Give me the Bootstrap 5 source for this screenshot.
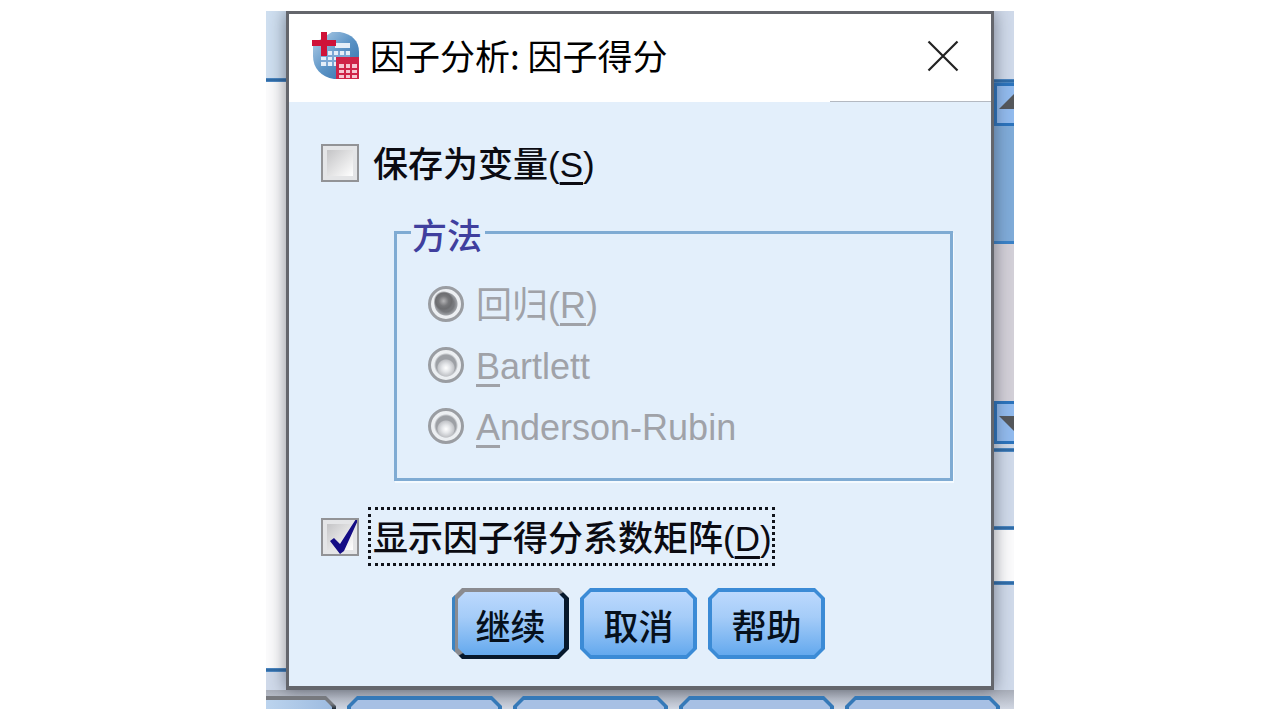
<!DOCTYPE html>
<html lang="zh-CN">
<head>
<meta charset="utf-8">
<meta name="viewport" content="width=device-width, initial-scale=1">
<title>因子分析: 因子得分</title>
<link href="https://cdn.jsdelivr.net/npm/bootstrap@5.3.0/dist/css/bootstrap.min.css" rel="stylesheet">
<style>
body{background:#fff;color:#0b0b12;font-family:"Liberation Sans","Noto Sans CJK SC",sans-serif;font-size:35px;line-height:40px}
.desk{max-width:748px;margin-top:11px;background:linear-gradient(#cfdcec,#cdd6e5)}
.side{width:20px}
.rule{height:4px;background:linear-gradient(#5a92ca,#22609d,#5a92ca)}
.sky{background:#cfdff0}
.paper{background:#fbfbfc}
.mist{background:#d0daea}
.dlg{border:3px solid #64666c;border-bottom-width:4px;background:#e3effb;box-shadow:0 0 16px rgba(40,45,60,.55)}
.titlebar{height:88px;padding:0 32px 4px 23px;gap:10px;background:linear-gradient(#b4b9c1,#b4b9c1) no-repeat right bottom/161px 1px,#fff}
.titletext{font-family:"Noto Sans CJK SC",sans-serif;font-size:35px;line-height:40px;padding-bottom:2px;font-weight:400;color:#000}
.closer{width:32px;height:32px}
.panel{padding:31px 38px 27px 32px}
.tick{appearance:none;width:38px;height:38px;margin:0;flex:none;border:2px solid #929396;background:linear-gradient(135deg,#c4c4c6,#fff) center/26px 26px no-repeat,#e4e5e7}
.tick:checked{background:url("data:image/svg+xml,%3Csvg xmlns='http://www.w3.org/2000/svg' viewBox='0 0 38 38'%3E%3Cpath d='M9 23l4-3 6 6L35 1l3-1-15 33-4 3z' fill='%23150d85'/%3E%3C/svg%3E") 0 0/38px 38px no-repeat border-box,linear-gradient(135deg,#c4c4c6,#fff) center/26px 26px no-repeat,#e4e5e7}
.opt{gap:9px}
.caption{border:3px solid transparent;height:59px;padding:8px 0 0 2px;line-height:42px}
.tick:checked + .caption{border:3px dotted #10131a;padding-right:0;margin-right:0}
.opt,.methods legend,.actions .key{font-weight:500}
u{text-decoration-thickness:3px;text-underline-offset:5px;text-decoration-skip-ink:none}
.methods{margin:17px 0 0 73px;border:3px solid #7fabd3;padding:18px 31px 22px;box-shadow:1px 2px 0 #f4faff}
.methods legend{float:none;width:auto;margin:0 0 0 -17px;padding:10px 3px 0 1px;font-size:35px;line-height:36px;color:#403f9e}
.pick{height:61px;gap:12px;font-size:36px;color:#a0a2a8}
.pick label{padding-top:4px}
.dot{appearance:none;width:36px;height:36px;margin:0;flex:none;border:3px solid #9a9da2;border-radius:50%;background:radial-gradient(circle at 50% 60%,#fff 0,#e4e6e9 4px,#c2c4c8 8px,transparent 9px),radial-gradient(circle,#9da0a5 10px,#eceff2 12px)}
.dot:checked{background:radial-gradient(circle at 42% 40%,#b4b4b6 0,#77787b 5px,#6c6d70 8px,transparent 10px),radial-gradient(circle,#77797d 8px,#9da0a5 11px,#eceff2 12px)}
.last{margin-top:26px}
.actions{margin:22px -6px 0 0;padding-right:3px;gap:11px}
.key{clip-path:polygon(10px 0,calc(100% - 10px) 0,100% 10px,100% calc(100% - 10px),calc(100% - 10px) 100%,10px 100%,0 calc(100% - 10px),0 10px)}
.key::before{clip-path:polygon(7px 0,calc(100% - 7px) 0,100% 7px,100% calc(100% - 7px),calc(100% - 7px) 100%,7px 100%,0 calc(100% - 7px),0 7px)}
.key{position:relative;z-index:0;width:117px;height:71px;padding:8px 0 0;border:0;border-radius:0;background:#3b8bd6;font-size:35px;line-height:42px;color:#06101c}
.key::before{content:"";position:absolute;z-index:-1;inset:4px;background:linear-gradient(#bcd9fd,#a5ccf8 40%,#64a9ee)}
.key.chosen{background:linear-gradient(90deg,#3a84c4 3px,transparent 3px),linear-gradient(to bottom right,#8a8b90 50%,#06182c 51%)}
.key.chosen::before{inset:4px 5px 4px 6px}
.behind{height:19px;padding-top:6px;gap:11px;background:linear-gradient(#a9aeb9,#d0d6e2)}
.behind .key{width:155px;flex:none;background:#3579b8}
.behind .key::before{background:#a7c0e4}
.behind .key.chosen{width:70px;background:linear-gradient(#77797e 8px,#0c1a28 14px);clip-path:polygon(0 0,calc(100% - 10px) 0,100% 10px,100% 100%,0 100%)}
.behind .key.chosen::before{inset:4px 4px 0 0;background:linear-gradient(90deg,#bcd4ee,#9dbbe0);clip-path:polygon(0 0,calc(100% - 7px) 0,100% 7px,100% 100%,0 100%)}
.arrowbox{height:43px;border:solid #2c74bd;border-width:3px 0 3px 3px;background:#92bbee}
.thumb{height:118px;background:#80acd9;border-bottom:3px solid #3a82c8}
.track{height:157px;background:#d3d0d8}
</style>
</head>
<body>
<main class="desk mx-auto overflow-hidden">
  <div class="d-flex">
    <div class="side d-flex flex-column" aria-hidden="true">
      <div class="sky" style="height:67px"></div><div class="rule"></div>
      <div class="paper flex-grow-1"></div><div class="rule"></div>
      <div class="mist" style="height:18px"></div>
    </div>
    <section class="dlg flex-grow-1 position-relative" role="dialog" aria-labelledby="dlgTitle">
      <header class="titlebar d-flex align-items-center">
        <svg width="48" height="48" viewBox="0 0 48 48" aria-hidden="true">
          <defs><linearGradient id="orb" x2="1" y2="1"><stop offset="0" stop-color="#b9d3ea"/><stop offset=".5" stop-color="#5c94c6"/><stop offset="1" stop-color="#2f6ca8"/></linearGradient></defs>
          <path d="M20 0h8C40 2 47 9 47 20v27H22C9 45 1 36 1 24V12z" fill="url(#orb)"/>
          <path d="M23 11h15v5H23zM9 19h29v15H9z" fill="#e4eef8"/>
          <path d="M9 24h29M9 29h29M15 19v15M21 19v15M27 19v15M33 19v8" stroke="#7ba7d4" stroke-width="2"/>
          <path d="M24 25h23v22H24z" fill="#cf2348"/>
          <path d="M27 32h5v4h-5zM34 32h4v4h-4zM40 32h5v4h-5zM27 38h5v3h-5zM34 38h4v3h-4zM40 38h5v3h-5zM27 43h5v3h-5zM34 43h4v3h-4zM40 43h5v3h-5z" fill="#f6c6d2"/>
          <path d="M9 0h6v8h9v6h-9v10H9V14H0V8h9z" fill="#cf1238"/>
        </svg>
        <h1 class="titletext mt-0 mb-0 ms-0 me-auto" id="dlgTitle">因子分析: 因子得分</h1>
        <button type="button" class="btn p-0 border-0 d-flex closer" aria-label="关闭">
          <svg width="32" height="32" viewBox="0 0 32 32"><path d="M1.500 1.500l29 29M30.500 1.500l-29 29" stroke="#222" stroke-width="2.200"/></svg>
        </button>
      </header>
      <form class="panel">
        <div class="opt d-flex align-items-center">
          <input class="tick" type="checkbox" id="save"><label class="caption" for="save">保存为变量(<u>S</u>)</label>
        </div>
        <fieldset class="methods">
          <legend>方法</legend>
          <div class="pick d-flex align-items-center"><input class="dot" type="radio" name="m" id="m1" checked disabled><label for="m1">回归(<u>R</u>)</label></div>
          <div class="pick d-flex align-items-center"><input class="dot" type="radio" name="m" id="m2" disabled><label for="m2"><u>B</u>artlett</label></div>
          <div class="pick d-flex align-items-center"><input class="dot" type="radio" name="m" id="m3" disabled><label for="m3"><u>A</u>nderson-Rubin</label></div>
        </fieldset>
        <div class="opt last d-flex align-items-center">
          <input class="tick" type="checkbox" id="show" checked><label class="caption" for="show">显示因子得分系数矩阵(<u>D</u>)</label>
        </div>
        <div class="actions d-flex justify-content-center">
          <button type="button" class="btn key chosen">继续</button>
          <button type="button" class="btn key">取消</button>
          <button type="button" class="btn key">帮助</button>
        </div>
      </form>
    </section>
    <div class="side d-flex flex-column" aria-hidden="true">
      <div class="mist" style="height:68px"></div><div class="rule"></div>
      <div class="arrowbox"><svg class="d-block" width="17" height="37" viewBox="0 0 17 37"><path d="M2 23L17 8v15z" fill="#55585c"/></svg></div>
      <div class="thumb"></div>
      <div class="track"></div>
      <div class="arrowbox"><svg class="d-block" width="17" height="37" viewBox="0 0 17 37"><path d="M2 12h15v15z" fill="#55585c"/></svg></div>
      <div class="rule mt-1"></div>
      <div class="mist" style="height:74px"></div><div class="rule"></div>
      <div class="paper" style="height:51px"></div><div class="rule"></div>
      <div class="mist flex-grow-1"></div>
    </div>
  </div>
  <div class="behind d-flex overflow-hidden" aria-hidden="true">
    <div class="key chosen"></div><div class="key"></div><div class="key"></div><div class="key"></div><div class="key"></div>
  </div>
</main>
<script src="https://cdn.jsdelivr.net/npm/bootstrap@5.3.0/dist/js/bootstrap.bundle.min.js"></script>
</body>
</html>
